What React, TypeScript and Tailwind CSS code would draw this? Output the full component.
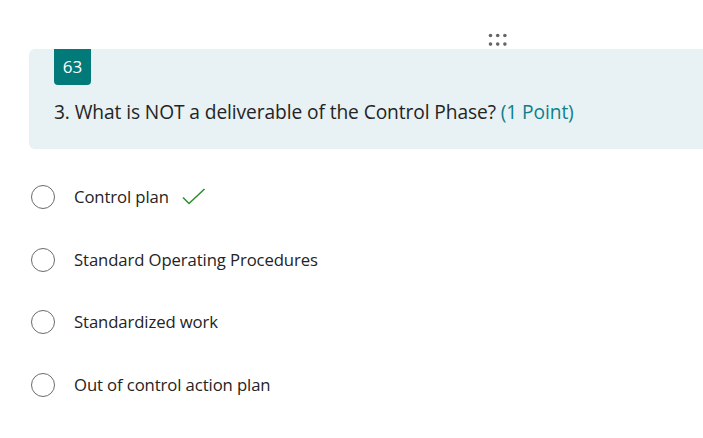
import React from "react";

const options = [
  { label: "Control plan", correct: true },
  { label: "Standard Operating Procedures", correct: false },
  { label: "Standardized work", correct: false },
  { label: "Out of control action plan", correct: false },
];

function DragHandle() {
  return (
    <svg width="20" height="13" viewBox="0 0 20 13" className="block">
      {[0, 1].map((r) =>
        [0, 1, 2].map((c) => (
          <circle key={`${r}-${c}`} cx={2.5 + c * 7.2} cy={2.5 + r * 8.6} r="1.8" fill="#666666" />
        ))
      )}
    </svg>
  );
}

function Radio() {
  return <span className="block w-[24px] h-[24px] shrink-0 rounded-full border-[1.5px] border-[#6b6b6b] bg-white" />;
}

function CheckMark() {
  return (
    <svg width="24" height="18" viewBox="0 0 24 18" className="block">
      <path d="M1 9.5 L7 15.5 L22.5 1" fill="none" stroke="#2d8f2d" strokeWidth="1.6" />
    </svg>
  );
}

export default function App() {
  return (
    <div className="w-[703px] h-[438px] bg-white overflow-hidden" style={{ fontFamily: '"Open Sans", "Noto Sans", sans-serif' }}>
      <div className="flex justify-center pt-[33px] pl-[293px] h-[49px]">
        <DragHandle />
      </div>
      <div className="ml-[29px] h-[100px] bg-[#e8f1f4] rounded-l-[6px] pl-[25px]">
        <div className="w-[37px] h-[36px] bg-[#037a7a] rounded-b-[4px] text-white text-[17px] flex items-center justify-center">
          63
        </div>
        <div className="mt-[13px] text-[19.2px] leading-[28px] text-[#242424] tracking-[-0.1px]">
          3. What is NOT a deliverable of the Control Phase? <span className="text-[#0f7f8c]">(1 Point)</span>
        </div>
      </div>
      <div className="flex flex-col pt-[36px] pl-[31px] gap-[38.5px]">
        {options.map((o) => (
          <div key={o.label} className="flex items-center h-[24px]">
            <Radio />
            <span className="ml-[19px] text-[16.7px] text-[#242424] tracking-[-0.1px]">{o.label}</span>
            {o.correct && (
              <span className="ml-[13px]">
                <CheckMark />
              </span>
            )}
          </div>
        ))}
      </div>
    </div>
  );
}
